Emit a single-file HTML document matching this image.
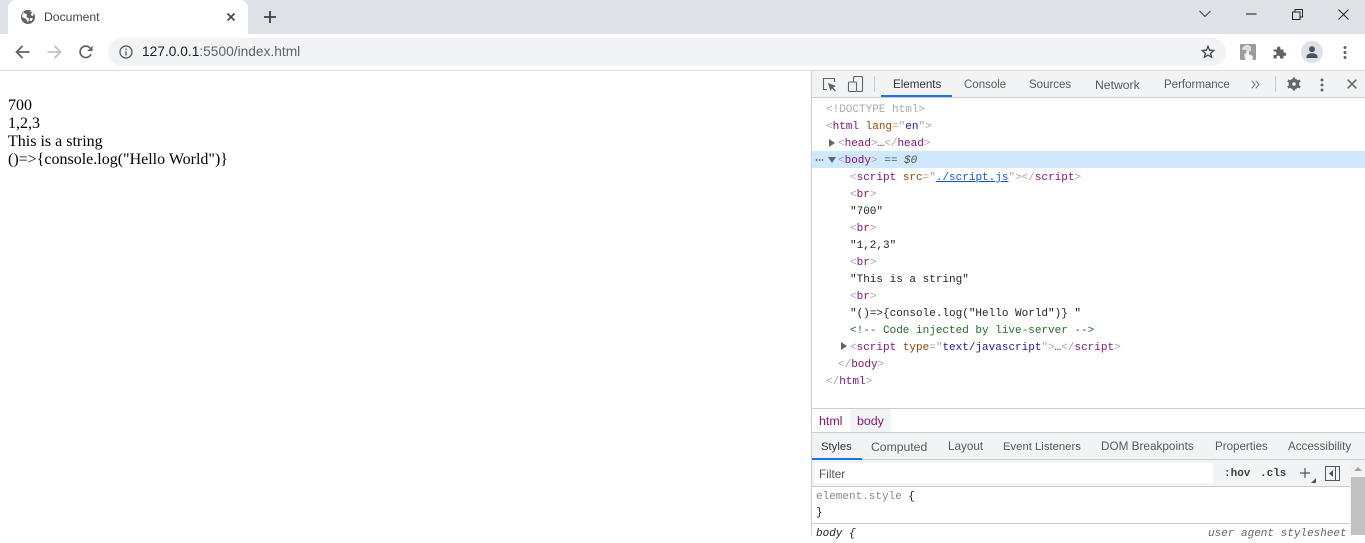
<!DOCTYPE html>
<html><head><meta charset="utf-8"><title>Document</title>
<style>
html,body{margin:0;padding:0;background:#fff;width:1365px;height:535px;overflow:hidden}
*{box-sizing:border-box}
.a{position:absolute;white-space:pre}
.s{font:12px/16px "Liberation Sans",sans-serif;color:#5a5a5a}
.r{position:absolute;left:0;height:17px;white-space:pre;font:11px/17px "Liberation Mono",monospace;color:#222}
.t{color:#881280}.g{color:#a5a5a5}.n{color:#994500}.v{color:#1a1aa6}
.tri{position:absolute;width:0;height:0}
svg{position:absolute;overflow:visible}
.l{position:absolute;background:#cbcdd1}
.p{position:absolute;white-space:pre;font:16px/18px "Liberation Serif",serif;color:#000;left:8px}
</style></head><body>
<!-- tab strip -->
<div class="l" style="left:0;top:0;width:1365px;height:34px;background:#dee1e6"></div>
<div class="l" style="left:8px;top:0;width:240px;height:36px;background:#fff;border-radius:8px 8px 0 0"></div>
<svg style="left:20px;top:9px" width="16" height="16" viewBox="0 0 16 16"><circle cx="8" cy="8" r="7" fill="#5f6368"/><path d="M3 3.500 7 5.500 6.500 8 9 9.500 8 13.500 6 10 2 8ZM9.500 2 12 3.500 10.500 6 12.800 7 14 5 12.500 2.500Z" fill="#fff"/><path d="M10 9h3l-1.500 3h-2z" fill="#fff"/></svg>
<div class="a s" style="left:44px;top:9px;color:#45474b;font-size:12.2px">Document</div>
<svg style="left:226px;top:12px" width="10" height="10"><path d="M1.500 1.500 8.500 8.500M8.500 1.500 1.500 8.500" stroke="#45474a" stroke-width="1.700" fill="none"/></svg>
<svg style="left:263px;top:10px" width="14" height="14"><path d="M7 1V13M1 7H13" stroke="#3c4043" stroke-width="1.800" fill="none"/></svg>
<svg style="left:1199px;top:10px" width="12" height="8"><path d="M.5 1 6 6.500 11.500 1" stroke="#3c4043" fill="none"/></svg>
<svg style="left:1246px;top:13px" width="12" height="2"><path d="M0 1H10.500" stroke="#222" stroke-width="1.100" fill="none"/></svg>
<svg style="left:1292px;top:9px" width="12" height="11"><path d="M.5 3h7.500v7.500H.5zM3 3V.5h7.500V8H8" stroke="#222" fill="none"/></svg>
<svg style="left:1338px;top:9px" width="12" height="12"><path d="M.5.5 10.500 10.500M10.500.5 .5 10.500" stroke="#222" fill="none"/></svg>

<!-- toolbar -->
<div class="l" style="left:0;top:34px;width:1365px;height:36px;background:#fff"></div>
<div class="l" style="left:0;top:70px;width:1365px;height:1px;background:#dadce0"></div>
<svg style="left:15px;top:45px" width="15" height="14"><path d="M14.500 7H2M7.500 1 1.500 7l6 6" stroke="#5f6368" stroke-width="1.800" fill="none"/></svg>
<svg style="left:47px;top:45px" width="15" height="14"><path d="M.5 7H13M7.500 1l6 6-6 6" stroke="#bdc1c6" stroke-width="1.800" fill="none"/></svg>
<svg style="left:79px;top:45px" width="14" height="14" viewBox="0 0 14 14"><path d="M12 9.200A5.700 5.700 0 1 1 11 3" stroke="#5f6368" stroke-width="1.700" fill="none"/><path d="M13.500.8V6H8.300Z" fill="#5f6368"/></svg>
<div class="l" style="left:108px;top:38px;width:1118px;height:28px;border-radius:14px;background:#f1f3f4"></div>
<svg style="left:119px;top:45px" width="14" height="14"><circle cx="7" cy="7" r="6" stroke="#5f6368" stroke-width="1.400" fill="none"/><path d="M7 6.200V10.500M7 3.500V5" stroke="#5f6368" stroke-width="1.400"/></svg>
<div class="a" style="left:142px;top:44px;font:13.75px/16px 'Liberation Sans',sans-serif;color:#202124">127.0.0.1<span style="color:#5f6368">:5500/index.html</span></div>
<svg style="left:1201px;top:45px" width="14" height="14" viewBox="0 0 14 14"><path d="M7 1.300 8.600 5.200l4.200.3-3.200 2.700 1 4.100L7 10.100 3.400 12.300l1-4.100L1.200 5.500l4.200-.3Z" stroke="#45474a" stroke-width="1.300" fill="none"/></svg>
<div class="l" style="left:1240px;top:44px;width:16px;height:16px;background:#9a9c9e;border-radius:1px"></div>
<svg style="left:1240px;top:44px" width="16" height="16"><path d="M2 6a5 5 0 0 1 9-3v4l-3 1v-1l-2-1zM5 16 4 10l2-1 1-3h2v4l4 2v4z" fill="#d9dde2"/><path d="M6 16 5.500 10 7 9 7.500 6.500h1V10.500L12 12.500V16z" fill="#f4f7fb"/></svg>
<svg style="left:1273px;top:45px" width="14" height="14" viewBox="0 0 14 14"><path d="M.5 4.500H4V3.200a1.700 1.700 0 0 1 3.400 0V4.500H10.500V7.500h1a1.700 1.700 0 0 1 0 3.400h-1V13.500H7V12.300a1.700 1.700 0 0 0-3.400 0V13.500H.5V10H1.700a1.800 1.800 0 0 0 0-3.600H.5Z" fill="#5f6368"/></svg>
<div class="l" style="left:1301px;top:41px;width:22px;height:22px;border-radius:50%;background:#dee1e6"></div>
<svg style="left:1305px;top:45px" width="14" height="14"><circle cx="7" cy="4.300" r="3" fill="#4a5468"/><path d="M1.500 13V11.300c0-2 3.500-3 5.500-3s5.500 1 5.500 3V13Z" fill="#4a5468"/></svg>
<svg style="left:1343px;top:45px" width="4" height="15"><circle cx="2" cy="2.500" r="1.500" fill="#5f6368"/><circle cx="2" cy="7.500" r="1.500" fill="#5f6368"/><circle cx="2" cy="12.500" r="1.500" fill="#5f6368"/></svg>

<!-- page -->
<div class="p" style="top:97px">700</div>
<div class="p" style="top:115px">1,2,3</div>
<div class="p" style="top:133px">This is a string</div>
<div class="p" style="top:151px">()=&gt;{console.log("Hello World")}</div>

<!-- devtools -->
<div class="l" style="left:811px;top:71px;width:1px;height:464px;background:#cbcdd1"></div>
<div class="l" style="left:812px;top:71px;width:553px;height:26px;background:#f1f3f4"></div>
<div class="l" style="left:812px;top:97px;width:553px;height:1px"></div>
<svg style="left:822px;top:77px" width="15" height="15"><path d="M5 12.500H1.500V1.500H12.500V5" stroke="#5f6368" stroke-width="1.100" fill="none"/><path d="M6 6 14 9 11 10.500 14 13.500 13 14.500 10 11.500 8.500 14Z" fill="#5f6368"/></svg>
<svg style="left:848px;top:76px" width="15" height="16"><path d="M5.500 6V1.500a1 1 0 0 1 1-1h7a1 1 0 0 1 1 1v13a1 1 0 0 1-1 1H9" stroke="#5f6368" stroke-width="1.100" fill="none"/><rect x=".5" y="6" width="8" height="9.500" rx="1" stroke="#5f6368" stroke-width="1.100" fill="none"/></svg>
<div class="l" style="left:874px;top:76px;width:1px;height:16px"></div>
<div class="a s" style="left:893px;top:77px;color:#333;font-size:11.6px">Elements</div>
<div class="l" style="left:881px;top:95px;width:71px;height:2px;background:#1a73e8"></div>
<div class="a s" style="left:964px;top:77px;font-size:11.5px">Console</div>
<div class="a s" style="left:1029px;top:77px;font-size:11.5px">Sources</div>
<div class="a s" style="left:1095px;top:77px;font-size:12.2px">Network</div>
<div class="a s" style="left:1164px;top:77px;font-size:11.5px">Performance</div>
<svg style="left:1251px;top:80px" width="10" height="9"><path d="M.7.700 4 4.500.7 8.300M4.700.700 8 4.500 4.700 8.300" stroke="#777" stroke-width="1" fill="none"/></svg>
<div class="l" style="left:1275px;top:76px;width:1px;height:16px"></div>
<svg style="left:1287px;top:77px" width="14" height="14" viewBox="0 0 14 14"><circle cx="7" cy="7" r="3.900" fill="none" stroke="#666" stroke-width="2.800"/><path d="M7 .5V13.500M.9 3.500 13.100 10.500M.9 10.500 13.100 3.500" stroke="#666" stroke-width="2.500"/><circle cx="7" cy="7" r="1.800" fill="#f1f3f4"/></svg>
<svg style="left:1320px;top:78px" width="4" height="14"><circle cx="2" cy="2" r="1.500" fill="#666"/><circle cx="2" cy="7" r="1.500" fill="#666"/><circle cx="2" cy="12" r="1.500" fill="#666"/></svg>
<svg style="left:1347px;top:79px" width="10" height="10"><path d="M.7.700 9.300 9.300M9.300.700 .7 9.300" stroke="#666" stroke-width="1.500" fill="none"/></svg>

<!-- DOM tree -->
<div class="l" style="left:812px;top:151px;width:553px;height:17px;background:#cfe8fc"></div>
<div class="r" style="top:102px;left:826px;color:#aaa">&lt;!DOCTYPE html&gt;</div>
<div class="r" style="top:119px;left:826px"><span class="g">&lt;</span><span class="t">html</span> <span class="n">lang</span><span class="g">="</span><span class="v">en</span><span class="g">"&gt;</span></div>
<div class="tri" style="left:829px;top:139px;border-left:6px solid #646464;border-top:4px solid transparent;border-bottom:4px solid transparent"></div>
<div class="r" style="top:136px;left:838px"><span class="g">&lt;</span><span class="t">head</span><span class="g">&gt;</span>…<span class="g">&lt;/</span><span class="t">head</span><span class="g">&gt;</span></div>
<div class="a" style="left:815px;top:159px;width:9px;height:2px;background:radial-gradient(circle,#777 0.8px,transparent 1px) 0 0/3px 2px"></div>
<div class="tri" style="left:828px;top:157px;border-top:6px solid #646464;border-left:4px solid transparent;border-right:4px solid transparent"></div>
<div class="r" style="top:153px;left:838px"><span class="g">&lt;</span><span class="t">body</span><span class="g">&gt;</span> <span style="color:#555">==</span> <i style="color:#555">$0</i></div>
<div class="r" style="top:170px;left:850px"><span class="g">&lt;</span><span class="t">script</span> <span class="n">src</span><span class="g">="</span><span style="color:#1155cc;text-decoration:underline">./script.js</span><span class="g">"&gt;&lt;/</span><span class="t">script</span><span class="g">&gt;</span></div>
<div class="r" style="top:187px;left:850px"><span class="g">&lt;</span><span class="t">br</span><span class="g">&gt;</span></div>
<div class="r" style="top:204px;left:850px">"700"</div>
<div class="r" style="top:221px;left:850px"><span class="g">&lt;</span><span class="t">br</span><span class="g">&gt;</span></div>
<div class="r" style="top:238px;left:850px">"1,2,3"</div>
<div class="r" style="top:255px;left:850px"><span class="g">&lt;</span><span class="t">br</span><span class="g">&gt;</span></div>
<div class="r" style="top:272px;left:850px">"This is a string"</div>
<div class="r" style="top:289px;left:850px"><span class="g">&lt;</span><span class="t">br</span><span class="g">&gt;</span></div>
<div class="r" style="top:306px;left:850px">"()=&gt;{console.log("Hello World")} "</div>
<div class="r" style="top:323px;left:850px;color:#236e25">&lt;!-- Code injected by live-server --&gt;</div>
<div class="tri" style="left:841px;top:342px;border-left:6px solid #646464;border-top:4px solid transparent;border-bottom:4px solid transparent"></div>
<div class="r" style="top:340px;left:850px"><span class="g">&lt;</span><span class="t">script</span> <span class="n">type</span><span class="g">="</span><span class="v">text/javascript</span><span class="g">"&gt;</span>…<span class="g">&lt;/</span><span class="t">script</span><span class="g">&gt;</span></div>
<div class="r" style="top:357px;left:838px"><span class="g">&lt;/</span><span class="t">body</span><span class="g">&gt;</span></div>
<div class="r" style="top:374px;left:826px"><span class="g">&lt;/</span><span class="t">html</span><span class="g">&gt;</span></div>

<!-- breadcrumbs -->
<div class="l" style="left:812px;top:408px;width:553px;height:1px"></div>
<div class="l" style="left:850px;top:409px;width:41px;height:23px;background:#f1f3f4"></div>
<div class="a s" style="left:819px;top:413px;color:#881280;font-size:12.4px">html</div>
<div class="a s" style="left:857px;top:413px;color:#881280;font-size:12.4px">body</div>
<div class="l" style="left:812px;top:432px;width:553px;height:1px"></div>

<!-- styles tabs -->
<div class="l" style="left:812px;top:433px;width:553px;height:26px;background:#f1f3f4"></div>
<div class="l" style="left:812px;top:459px;width:553px;height:1px"></div>
<div class="l" style="left:812px;top:458px;width:50px;height:2px;background:#1a73e8"></div>
<div class="a s" style="left:821px;top:439px;color:#333;font-size:11.3px">Styles</div>
<div class="a s" style="left:871px;top:439px;font-size:12.2px">Computed</div>
<div class="a s" style="left:948px;top:439px;font-size:11.7px">Layout</div>
<div class="a s" style="left:1003px;top:439px;font-size:11.3px">Event Listeners</div>
<div class="a s" style="left:1101px;top:439px;font-size:11.75px">DOM Breakpoints</div>
<div class="a s" style="left:1215px;top:439px;font-size:11.6px">Properties</div>
<div class="a s" style="left:1288px;top:439px;font-size:11.6px">Accessibility</div>

<!-- filter -->
<div class="l" style="left:812px;top:460px;width:553px;height:26px;background:#f1f3f4"></div>
<div class="l" style="left:815px;top:463px;width:398px;height:20px;background:#fff"></div>
<div class="a s" style="left:819px;top:466px;color:#555;font-size:11.8px">Filter</div>
<div class="l" style="left:812px;top:486px;width:538px;height:1px"></div>
<div class="a" style="left:1224px;top:466px;font:bold 11px/17px 'Liberation Mono',monospace;color:#444">:hov</div>
<div class="a" style="left:1260px;top:466px;font:bold 11px/17px 'Liberation Mono',monospace;color:#444">.cls</div>
<svg style="left:1299px;top:467px" width="18" height="17"><path d="M6 1V11M1 6H11" stroke="#555" stroke-width="1.200"/><path d="M17 11V16H12Z" fill="#555"/></svg>
<svg style="left:1325px;top:466px" width="15" height="15"><rect x=".5" y=".5" width="14" height="14" fill="none" stroke="#555"/><path d="M10.500.5V14.500" stroke="#555"/><path d="M8 4V11L4 7.500Z" fill="#555"/></svg>

<!-- scrollbar -->
<div class="l" style="left:1350px;top:460px;width:15px;height:75px;background:#f1f1f1"></div>
<div class="tri" style="left:1354px;top:467px;border-bottom:4px solid #a3a3a3;border-left:4px solid transparent;border-right:4px solid transparent"></div>
<div class="l" style="left:1351px;top:477px;width:14px;height:58px;background:#c1c1c1"></div>

<!-- styles -->
<div class="r" style="top:489px;left:816px;color:#888">element.style <span style="color:#222">{</span></div>
<div class="r" style="top:505px;left:816px">}</div>
<div class="l" style="left:812px;top:523px;width:538px;height:1px"></div>
<div class="r" style="top:526px;left:816px;font-style:italic">body {</div>
<div class="r" style="top:526px;left:1208px;font-style:italic;color:#666">user agent stylesheet</div>
</body></html>
